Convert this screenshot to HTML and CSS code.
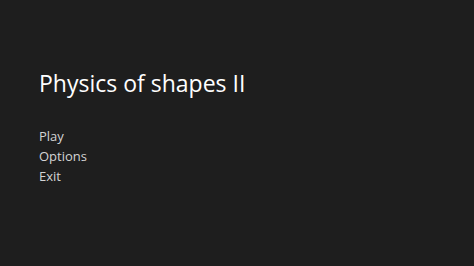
FILE: index.html
```html
<!DOCTYPE html>
<html>
<head>
<meta charset="utf-8">
<link rel="stylesheet" href="styles.css">
</head>
<body>
<div class="screen">
  <h1 class="title">Physics of shapes II</h1>
  <ul class="menu">
    <li>Play</li>
    <li>Options</li>
    <li>Exit</li>
  </ul>
</div>
</body>
</html>
```
FILE: styles.css
```css
html, body {
  margin: 0;
  padding: 0;
  background: #1e1e1e;
}
.screen {
  width: 474px;
  height: 266px;
  box-sizing: border-box;
  padding: 68px 0 0 39px;
  font-family: "Open Sans", "DejaVu Sans", sans-serif;
}
.title {
  margin: 0;
  font-weight: normal;
  font-size: 23px;
  line-height: 30px;
  color: #ffffff;
}
.menu {
  list-style: none;
  margin: 28px 0 0 0;
  padding: 0;
  color: #d4d4d4;
  font-size: 13px;
  line-height: 20px;
}
```
